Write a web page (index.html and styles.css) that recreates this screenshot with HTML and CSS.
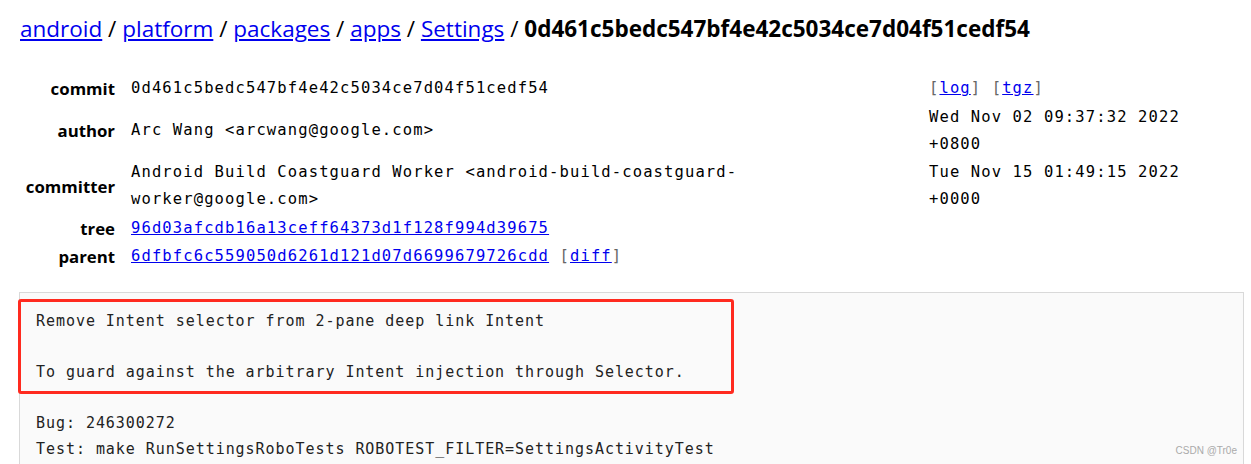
FILE: index.html
```html
<!DOCTYPE html>
<html>
<head>
<meta charset="utf-8">
<link rel="stylesheet" href="styles.css">
</head>
<body>
<div class="page">
  <h1 class="title"><a href="#">android</a> / <a href="#">platform</a> / <a href="#">packages</a> / <a href="#">apps</a> / <a href="#">Settings</a> / <span class="hash">0d461c5bedc547bf4e42c5034ce7d04f51cedf54</span></h1>

  <div class="meta">
    <div class="label">commit</div>
    <div class="value">0d461c5bedc547bf4e42c5034ce7d04f51cedf54</div>
    <div class="date"><span class="br">[</span><a href="#">log</a><span class="br">]</span> <span class="br">[</span><a href="#">tgz</a><span class="br">]</span></div>

    <div class="label">author</div>
    <div class="value">Arc Wang &lt;arcwang@google.com&gt;</div>
    <div class="date">Wed Nov 02 09:37:32 2022 +0800</div>

    <div class="label">committer</div>
    <div class="value">Android Build Coastguard Worker &lt;android-build-coastguard-worker@google.com&gt;</div>
    <div class="date">Tue Nov 15 01:49:15 2022 +0000</div>

    <div class="label">tree</div>
    <div class="value"><a href="#">96d03afcdb16a13ceff64373d1f128f994d39675</a></div>
    <div class="date"></div>

    <div class="label">parent</div>
    <div class="value"><a href="#">6dfbfc6c559050d6261d121d07d6699679726cdd</a> <span class="br">[</span><a href="#">diff</a><span class="br">]</span></div>
    <div class="date"></div>
  </div>

  <div class="message">
    <pre class="msg-text">Remove Intent selector from 2-pane deep link Intent

To guard against the arbitrary Intent injection through Selector.

Bug: 246300272
Test: make RunSettingsRoboTests ROBOTEST_FILTER=SettingsActivityTest</pre>
    <div class="highlight"></div>
    <div class="watermark">CSDN @Tr0e</div>
  </div>
</div>
</body>
</html>
```

FILE: styles.css
```css
html, body {
  margin: 0;
  padding: 0;
  background: #fff;
  color: #000;
  font-family: "Open Sans", "Noto Sans", sans-serif;
}

.page {
  padding: 14px 0 0 20px;
}

a {
  color: #0000ee;
  text-decoration: underline;
}

.title {
  margin: 0;
  font-size: 22.5px;
  line-height: 30px;
  font-weight: 400;
}

.title .hash {
  font-weight: 700;
}

.meta {
  margin-top: 31px;
  display: grid;
  grid-template-columns: 95px 700px 280px;
  column-gap: 16px;
  row-gap: 1.5px;
  align-items: center;
}

.label {
  text-align: right;
  font-weight: 700;
  font-size: 16.8px;
  line-height: 27px;
  white-space: nowrap;
}

.value, .date {
  font-family: "DejaVu Sans Mono", monospace;
  font-size: 15.5px;
  letter-spacing: 1.12px;
  line-height: 27px;
}

.date {
  margin-left: 82px;
  width: 280px;
}

.br {
  color: #666;
}

.message {
  position: relative;
  margin: 22px 7px 0 -1px;
  border: 1px solid #d9d9d9;
  border-bottom: none;
  background: #fafafa;
  padding: 16px 16px 0 16px;
  height: 172px;
  box-sizing: border-box;
}

.msg-text {
  margin: 0;
  font-family: "DejaVu Sans Mono", monospace;
  font-size: 15px;
  letter-spacing: 0.95px;
  line-height: 25.5px;
  color: #222;
}

.highlight {
  position: absolute;
  left: -2px;
  top: 6px;
  width: 716px;
  height: 95px;
  border: 3px solid #ff2a1f;
  border-radius: 3px;
  box-sizing: border-box;
}

.watermark {
  position: absolute;
  right: 6px;
  bottom: 8px;
  font-family: "Liberation Sans", sans-serif;
  font-size: 10px;
  color: #aaa;
}
```
